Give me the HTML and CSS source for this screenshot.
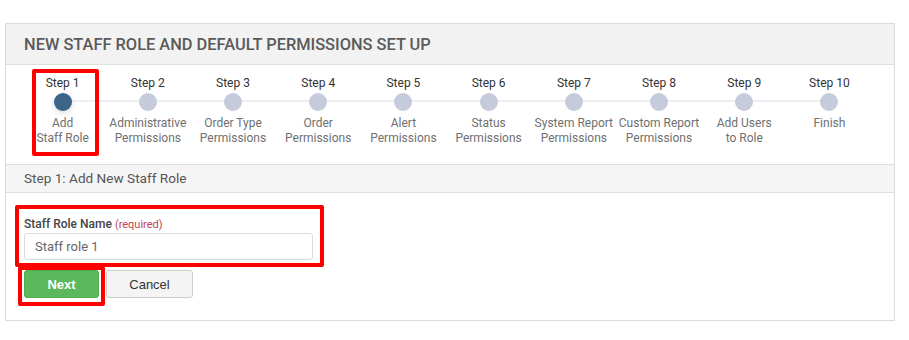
FILE: index.html
```html
<!DOCTYPE html>
<html lang="en">
<head>
    <meta charset="UTF-8">
    <title>New Staff Role</title>
    <link rel="stylesheet" href="styles.css">
</head>
<body>
    <div class="panel">
        <div class="panel-heading">New Staff Role and Default Permissions Set Up</div>

        <div class="wizard">
            <div class="wizard-line"></div>
            <div class="step active">
                <div class="step-num">Step 1</div>
                <div class="step-dot"></div>
                <div class="step-name">Add<br>Staff Role</div>
            </div>
            <div class="step">
                <div class="step-num">Step 2</div>
                <div class="step-dot"></div>
                <div class="step-name">Administrative<br>Permissions</div>
            </div>
            <div class="step">
                <div class="step-num">Step 3</div>
                <div class="step-dot"></div>
                <div class="step-name">Order Type<br>Permissions</div>
            </div>
            <div class="step">
                <div class="step-num">Step 4</div>
                <div class="step-dot"></div>
                <div class="step-name">Order<br>Permissions</div>
            </div>
            <div class="step">
                <div class="step-num">Step 5</div>
                <div class="step-dot"></div>
                <div class="step-name">Alert<br>Permissions</div>
            </div>
            <div class="step">
                <div class="step-num">Step 6</div>
                <div class="step-dot"></div>
                <div class="step-name">Status<br>Permissions</div>
            </div>
            <div class="step">
                <div class="step-num">Step 7</div>
                <div class="step-dot"></div>
                <div class="step-name">System Report<br>Permissions</div>
            </div>
            <div class="step">
                <div class="step-num">Step 8</div>
                <div class="step-dot"></div>
                <div class="step-name">Custom Report<br>Permissions</div>
            </div>
            <div class="step">
                <div class="step-num">Step 9</div>
                <div class="step-dot"></div>
                <div class="step-name">Add Users<br>to Role</div>
            </div>
            <div class="step">
                <div class="step-num">Step 10</div>
                <div class="step-dot"></div>
                <div class="step-name">Finish</div>
            </div>
        </div>

        <div class="section-heading">Step 1: Add New Staff Role</div>

        <form class="section-body">
            <div class="form-group highlight">
                <label for="roleName">Staff Role Name <span class="required">(required)</span></label>
                <input type="text" id="roleName" value="Staff role 1">
            </div>
            <div class="actions">
                <div class="highlight highlight-btn">
                    <button type="button" class="btn btn-success">Next</button>
                </div>
                <button type="button" class="btn btn-default">Cancel</button>
            </div>
        </form>
    </div>
</body>
</html>
```

FILE: styles.css
```css
* {
    margin: 0;
    padding: 0;
    box-sizing: border-box;
}

body {
    font-family: Roboto, "Liberation Sans", Arial, sans-serif;
    background: #fff;
    padding: 23px 14px 0 5px;
    color: #555;
}

.panel {
    border: 1px solid #dcdcdc;
    background: #fff;
}

.panel-heading {
    background: #f2f2f2;
    border-bottom: 1px solid #dcdfdc;
    height: 41px;
    padding: 0 18px;
    line-height: 41px;
    font-size: 16.4px;
    font-weight: 500;
    text-transform: uppercase;
    color: #5a5a5a;
}

.wizard {
    position: relative;
    display: flex;
    padding: 11px 22px 0 14px;
    height: 99px;
}

.wizard-line {
    position: absolute;
    left: 56px;
    right: 64px;
    top: 35px;
    height: 2px;
    background: #eceef4;
}

.step {
    position: relative;
    flex: 1;
    text-align: center;
    font-size: 12px;
    line-height: 15px;
}

.step-num {
    color: #333;
    height: 16px;
}

.step-dot {
    width: 18px;
    height: 18px;
    border-radius: 50%;
    background: #c5cbdb;
    margin: 1px auto 5px;
}

.step.active .step-dot {
    background: #3b6489;
    box-shadow: 0 2px 6px rgba(0, 0, 0, 0.15);
}

.step-name {
    color: #707070;
}

.step.active::after {
    content: "";
    box-sizing: border-box;
    position: absolute;
    left: 12px;
    right: 6px;
    top: -7px;
    height: 87px;
    border: 4px solid #f00;
    border-radius: 2px;
}

.section-heading {
    background: #f5f5f5;
    border-top: 1px solid #dcdfdc;
    border-bottom: 1px solid #dcdfdc;
    height: 29px;
    line-height: 27px;
    padding: 0 18px;
    font-size: 13.6px;
    color: #555;
}

.section-body {
    padding: 12px 9px 14px;
}

.highlight {
    border: 4px solid #f00;
    border-radius: 2px;
}

.form-group {
    width: 309px;
    padding: 7px 7px 3px 5px;
}

label {
    display: block;
    font-size: 12px;
    font-weight: 500;
    color: #444;
    line-height: 16px;
}

.required {
    color: #c2415a;
    font-weight: 400;
    font-size: 11px;
}

input[type="text"] {
    width: 100%;
    height: 27px;
    border: 1px solid #dcdcdc;
    border-radius: 3px;
    padding: 0 10px;
    font-family: inherit;
    font-size: 13px;
    color: #666;
}

.actions {
    display: flex;
    align-items: flex-start;
    margin-top: -1px;
    padding-left: 3px;
}

.highlight-btn {
    padding: 0 2px 4px;
    margin-right: 1px;
}

.btn {
    height: 28px;
    border-radius: 3px;
    font-family: "Liberation Sans", Arial, sans-serif;
    font-size: 13px;
    cursor: pointer;
}

.btn-success {
    width: 75px;
    background: #5cb85c;
    border: 1px solid #4cae4c;
    color: #fff;
    font-weight: bold;
}

.btn-default {
    width: 87px;
    margin-top: 4px;
    background: #f4f4f4;
    border: 1px solid #ccc;
    color: #333;
}
```
